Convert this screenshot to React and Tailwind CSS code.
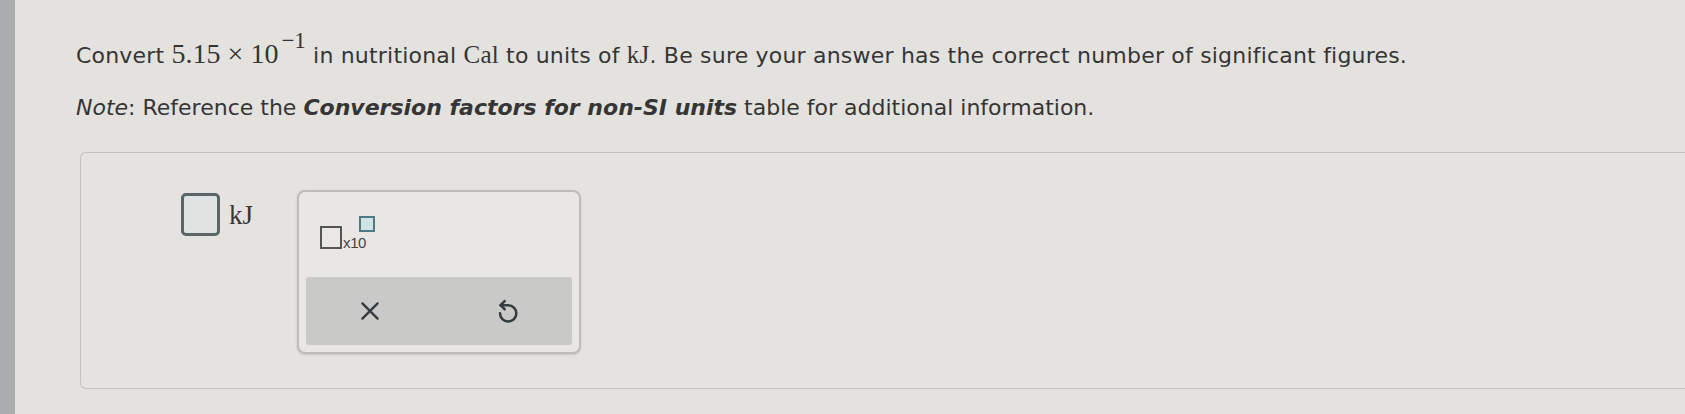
export default function App() {
  return (
    <div className="flex h-[414px] w-[1685px] overflow-hidden bg-[#e4e2de] text-[#353535]" style={{ fontFamily: '"DejaVu Sans", sans-serif' }}>
      <div className="w-[15px] shrink-0 bg-[#a9adae]" />
      <div className="flex-1 min-w-0">
        <div className="pl-[61px] pt-[39px] text-[22px] leading-[30px] whitespace-nowrap">
          <p className="tracking-[0.2px]">
            Convert{' '}
            <span className="font-['Liberation_Serif',serif] text-[28px] tracking-normal">
              5.15 × 10
              <span className="relative -top-[15px] ml-[3px] text-[23px]">−1</span>
            </span>{' '}
            in nutritional <span className="font-['Liberation_Serif',serif] text-[25px]">Cal</span> to units of{' '}
            <span className="font-['Liberation_Serif',serif] text-[25px]">kJ</span>. Be sure your answer has the correct number of significant figures.
          </p>
          <p className="mt-[22px]">
            <span className="italic">Note</span>: Reference the{' '}
            <span className="font-bold italic">Conversion factors for non-SI units</span> table for additional information.
          </p>
        </div>

        <div className="ml-[65px] mt-[29px] flex h-[237px] w-[1660px] rounded-l-md border border-r-0 border-[#c3c2bf] bg-[#e5e3df] pl-[100px] pt-[37px]">
          <div className="flex items-start">
            <div className="mt-[3px] h-[43px] w-[39px] rounded-[5px] border-[3px] border-[#5b6466] bg-[#dfe4e3]" />
            <span className="ml-[9px] mt-[10px] font-['Liberation_Serif',serif] text-[27px] leading-[30px] text-[#3a3535]">kJ</span>

            <div className="ml-[44px] flex h-[164px] w-[284px] flex-col rounded-lg border-2 border-[#bdbcba] bg-[#e8e7e4] px-[7px] pb-[7px] shadow-sm">
              <div className="flex h-[85px] items-start pl-[14px] pt-[24px]">
                <div className="mt-[10px] h-[23px] w-[22px] border-2 border-[#555555] bg-[#e9e8e5]" />
                <span className="mt-[19px] ml-[1px] text-[15px] leading-[16px] tracking-tight text-[#444]" style={{ fontFamily: '"Liberation Sans", sans-serif' }}>x10</span>
                <div className="-ml-[7px] h-[16px] w-[16px] border-2 border-[#4f7a80] bg-[#cfe3e4]" />
              </div>
              <div className="flex h-[68px] items-center justify-center gap-[110px] rounded-[3px] bg-[#c9c9c7]">
                <svg width="26" height="26" viewBox="0 0 24 24" fill="none" stroke="#363b40" strokeWidth="2.2" strokeLinecap="round">
                  <path d="M5 5 L19 19 M19 5 L5 19" />
                </svg>
                <svg width="28" height="28" viewBox="0 0 24 24" fill="none" stroke="#363b40" strokeWidth="2.2" strokeLinecap="round" strokeLinejoin="round">
                  <path d="M10 3.5 L6.5 7 L10 10.5" />
                  <path d="M6.5 7 H13 A7 7 0 1 1 6 14" />
                </svg>
              </div>
            </div>
          </div>
        </div>
      </div>
    </div>
  );
}
